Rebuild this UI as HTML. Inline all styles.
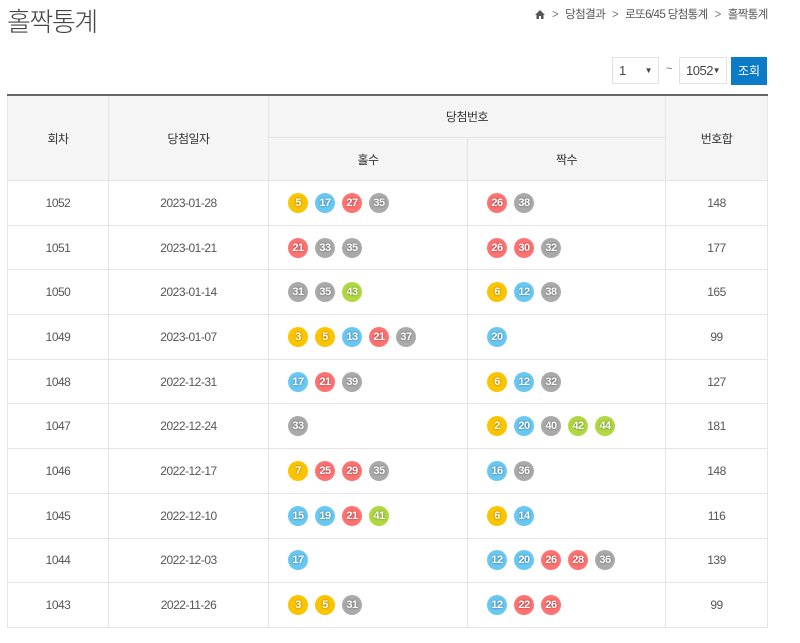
<!DOCTYPE html>
<html><head><meta charset="utf-8"><style>
body{margin:0;width:800px;height:643px;background:#fff;font-family:"Liberation Sans","Noto Sans CJK KR",sans-serif;color:#333;position:relative;overflow:hidden}
.t{position:absolute;left:7px;top:2px;font-size:26px;color:#444;font-weight:300;letter-spacing:-1.5px}
.bc{position:absolute;left:535px;top:6px;font-size:11.5px;color:#555;letter-spacing:-0.6px;white-space:nowrap}
.bc span{margin:0 7px;color:#777}
.sel{position:absolute;top:57px;height:27px;border:1px solid #e2e2e2;box-sizing:border-box;font-size:13px;line-height:25px;padding-left:6px;color:#444;background:#fff;letter-spacing:-0.5px}
.sel i{position:absolute;right:6px;top:0;font-style:normal;font-size:8px}
.btn{position:absolute;left:731px;top:57px;width:36px;height:28px;background:#0b7bc8;color:#fff;font-size:12px;text-align:center;line-height:28px}
table{position:absolute;left:7px;top:94px;width:760px;border-collapse:collapse;table-layout:fixed;border-top:2px solid #666}
td,th{border:1px solid #e5e5e5;text-align:center;font-size:12px;color:#555;font-weight:normal;padding:0;letter-spacing:-0.5px}
th{background:#f5f5f5;color:#333}
td{height:43.7px}
td.b{text-align:left;padding-left:19px}
.n{display:inline-block;width:20px;height:20px;border-radius:50%;color:#fff;font-size:11px;font-weight:bold;line-height:20px;text-align:center;margin-right:7px;vertical-align:middle;text-shadow:0 0 2px rgba(0,0,0,.5);letter-spacing:-0.5px}
.y{background:#fbc400}.bl{background:#69c8f2}.r{background:#ff7272}.g{background:#aaa}.gr{background:#b0d840}
</style></head><body>
<div class="t">홀짝통계</div>
<div class="bc"><svg width="10" height="9" viewBox="0 0 10 9" style="vertical-align:-1px"><path d="M5 0L0 5h1.5v4h2.5V6h2v3h2.5V5H10z" fill="#555"/></svg><span>&gt;</span>당첨결과<span>&gt;</span>로또6/45 당첨통계<span>&gt;</span>홀짝통계</div>
<div class="sel" style="left:612px;width:47px">1<i>▼</i></div>
<div style="position:absolute;left:666px;top:63px;font-size:11px;color:#666">~</div>
<div class="sel" style="left:679px;width:48px">1052<i>▼</i></div>
<div class="btn">조회</div>
<table>
<colgroup><col style="width:101px"><col style="width:160px"><col style="width:199px"><col style="width:198px"><col style="width:102px"></colgroup>
<tr><th rowspan="2" style="height:84px">회차</th><th rowspan="2">당첨일자</th><th colspan="2" style="height:41px">당첨번호</th><th rowspan="2">번호합</th></tr>
<tr><th style="height:42px">홀수</th><th>짝수</th></tr>
<tr><td>1052</td><td>2023-01-28</td><td class="b"><span class="n y">5</span><span class="n bl">17</span><span class="n r">27</span><span class="n g">35</span></td><td class="b"><span class="n r">26</span><span class="n g">38</span></td><td>148</td></tr>
<tr><td>1051</td><td>2023-01-21</td><td class="b"><span class="n r">21</span><span class="n g">33</span><span class="n g">35</span></td><td class="b"><span class="n r">26</span><span class="n r">30</span><span class="n g">32</span></td><td>177</td></tr>
<tr><td>1050</td><td>2023-01-14</td><td class="b"><span class="n g">31</span><span class="n g">35</span><span class="n gr">43</span></td><td class="b"><span class="n y">6</span><span class="n bl">12</span><span class="n g">38</span></td><td>165</td></tr>
<tr><td>1049</td><td>2023-01-07</td><td class="b"><span class="n y">3</span><span class="n y">5</span><span class="n bl">13</span><span class="n r">21</span><span class="n g">37</span></td><td class="b"><span class="n bl">20</span></td><td>99</td></tr>
<tr><td>1048</td><td>2022-12-31</td><td class="b"><span class="n bl">17</span><span class="n r">21</span><span class="n g">39</span></td><td class="b"><span class="n y">6</span><span class="n bl">12</span><span class="n g">32</span></td><td>127</td></tr>
<tr><td>1047</td><td>2022-12-24</td><td class="b"><span class="n g">33</span></td><td class="b"><span class="n y">2</span><span class="n bl">20</span><span class="n g">40</span><span class="n gr">42</span><span class="n gr">44</span></td><td>181</td></tr>
<tr><td>1046</td><td>2022-12-17</td><td class="b"><span class="n y">7</span><span class="n r">25</span><span class="n r">29</span><span class="n g">35</span></td><td class="b"><span class="n bl">16</span><span class="n g">36</span></td><td>148</td></tr>
<tr><td>1045</td><td>2022-12-10</td><td class="b"><span class="n bl">15</span><span class="n bl">19</span><span class="n r">21</span><span class="n gr">41</span></td><td class="b"><span class="n y">6</span><span class="n bl">14</span></td><td>116</td></tr>
<tr><td>1044</td><td>2022-12-03</td><td class="b"><span class="n bl">17</span></td><td class="b"><span class="n bl">12</span><span class="n bl">20</span><span class="n r">26</span><span class="n r">28</span><span class="n g">36</span></td><td>139</td></tr>
<tr><td>1043</td><td>2022-11-26</td><td class="b"><span class="n y">3</span><span class="n y">5</span><span class="n g">31</span></td><td class="b"><span class="n bl">12</span><span class="n r">22</span><span class="n r">26</span></td><td>99</td></tr>
</table>
</body></html>
